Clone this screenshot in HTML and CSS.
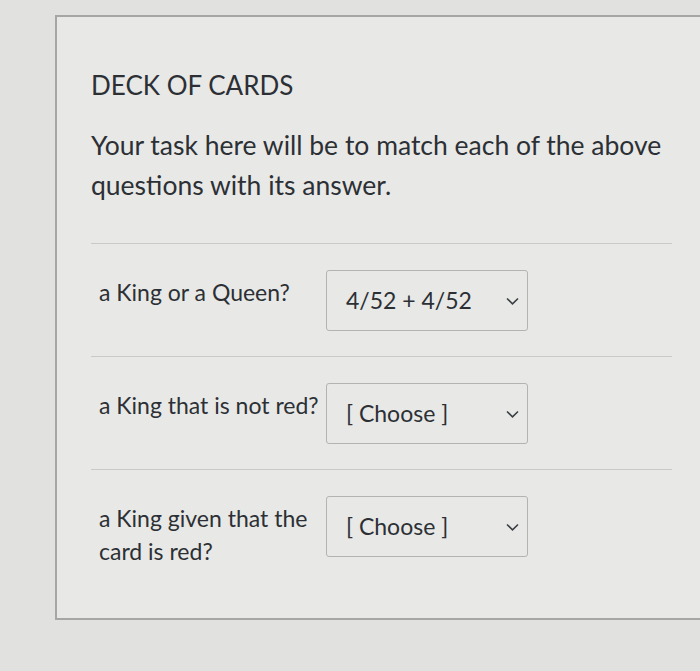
FILE: index.html
```html
<!DOCTYPE html>
<html lang="en">
<head>
    <meta charset="UTF-8">
    <meta name="viewport" content="width=device-width, initial-scale=1.0">
    <title>Deck of Cards</title>
    <link rel="stylesheet" href="styles.css">
</head>
<body>

    <div class="panel">
        <h2 class="title">DECK OF CARDS</h2>
        <p class="intro">Your task here will be to match each of the above questions with its answer.</p>

        <!-- Matching rows -->
        <div class="match-row">
            <div class="question">a King or a Queen?</div>
            <div class="answer">
                <span class="answer-text">4/52 + 4/52</span>
                <svg class="chevron" width="13" height="8" viewBox="0 0 13 8"><path d="M1 1.5 L6.5 6.8 L12 1.5" fill="none" stroke="#3a3f44" stroke-width="1.6"/></svg>
            </div>
        </div>

        <div class="match-row">
            <div class="question">a King that is not red?</div>
            <div class="answer">
                <span class="answer-text">[ Choose ]</span>
                <svg class="chevron" width="13" height="8" viewBox="0 0 13 8"><path d="M1 1.5 L6.5 6.8 L12 1.5" fill="none" stroke="#3a3f44" stroke-width="1.6"/></svg>
            </div>
        </div>

        <div class="match-row last">
            <div class="question">a King given that the card is red?</div>
            <div class="answer">
                <span class="answer-text">[ Choose ]</span>
                <svg class="chevron" width="13" height="8" viewBox="0 0 13 8"><path d="M1 1.5 L6.5 6.8 L12 1.5" fill="none" stroke="#3a3f44" stroke-width="1.6"/></svg>
            </div>
        </div>
    </div>

</body>
</html>
```

FILE: styles.css
```css
body, html {
    margin: 0;
    background-color: #e1e1df;
    font-family: Lato, "Open Sans", sans-serif;
    color: #2c3035;
    height: 100%;
    overflow: hidden;
}

/* Question panel */
.panel {
    margin: 15px 0 0 55px;
    width: 645px;
    box-sizing: border-box;
    padding: 0 28px 0 34px;
    background-color: #e8e8e6;
    border: 2px solid #a6a6a4;
    border-right: none;
}

.title {
    margin: 53px 0 0;
    font-size: 26px;
    font-weight: 400;
    line-height: 1.2;
}

.intro {
    margin: 24px 0 38px;
    font-size: 26.5px;
    line-height: 40px;
}

/* Rows */
.match-row {
    display: flex;
    align-items: flex-start;
    border-top: 1px solid #c9c9c7;
    padding: 26px 0 25px 8px;
}

.match-row.last {
    padding-bottom: 50px;
}

.question {
    width: 227px;
    padding: 6px 2px 0 0;
    box-sizing: border-box;
    font-size: 23px;
    line-height: 33px;
}

.answer {
    width: 202px;
    height: 61px;
    box-sizing: border-box;
    border: 1px solid #b3b3b1;
    border-radius: 3px;
    display: flex;
    align-items: center;
    justify-content: space-between;
    padding: 0 8px 0 19px;
}

.answer-text {
    font-size: 23px;
    line-height: 1.2;
}

.chevron {
    display: block;
}
```
